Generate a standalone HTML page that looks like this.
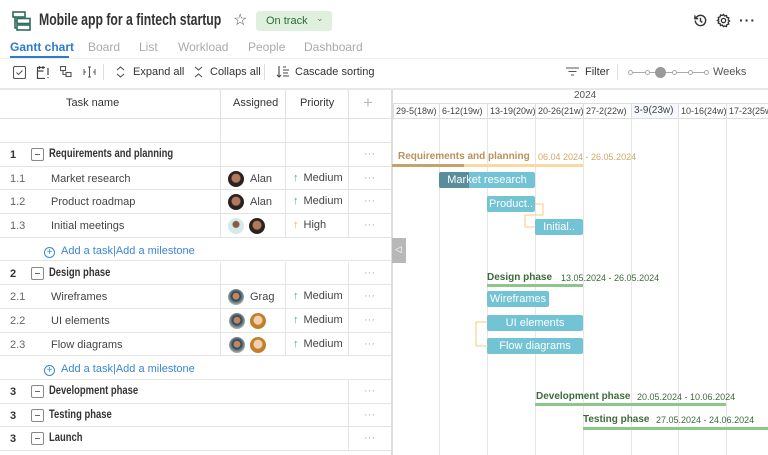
<!DOCTYPE html><html><head><meta charset="utf-8"><style>
*{box-sizing:border-box;margin:0;padding:0}
body{width:768px;height:455px;overflow:hidden;background:#fff;font-family:"Liberation Sans",sans-serif;color:#333;position:relative}
.a{position:absolute}
.t{font-size:11px;white-space:nowrap}
.row{position:absolute;left:0;width:391px;height:23.7px;border-bottom:1px solid #e4e4e4}
.vl{position:absolute;top:0;bottom:0;width:1px;background:#e4e4e4}
.num{position:absolute;left:10px;top:6px;font-size:11px;color:#666}
.nb{color:#333;font-weight:bold}
.name{position:absolute;left:51px;top:6px;font-size:11px;color:#444}
.gn{left:49px;top:5px;font-weight:bold;color:#333;font-size:11.5px;transform:scaleX(.82);transform-origin:left;white-space:nowrap}
.box{position:absolute;left:31px;top:5px;width:13px;height:13px;border:1px solid #888;border-radius:2px}
.box:after{content:"";position:absolute;left:3px;top:5px;width:5px;height:1px;background:#666}
.dots{position:absolute;left:364px;top:6px;font-size:11px;line-height:11px;color:#aaa}
.av{position:absolute;top:4px;width:16px;height:16px;border-radius:50%;background:radial-gradient(circle at 50% 45%,#b07a5a 0 4px,#2a2220 5px)}
.av2{background:radial-gradient(circle at 50% 40%,#8a5a40 0 3px,#d4e9ec 4px)}
.av3{background:radial-gradient(circle at 50% 45%,#c08860 0 3px,#2c3e50 4px,#9aa 8px)}
.av4{background:radial-gradient(circle at 50% 45%,#f0d0b0 0 4px,#c0802a 5px)}
.who{position:absolute;left:250px;top:6px;font-size:11px;color:#444}
.pr{position:absolute;left:293px;top:5px;font-size:11px;color:#444}
.pr b{font-weight:normal;color:#3bb56b;margin-right:5px}
.add{position:absolute;left:44px;top:7px;font-size:11px;color:#3a86d4}
.gl{position:absolute;top:118px;bottom:0;width:1px;background:#e6e6e6}
.bar{position:absolute;height:16px;background:#72c3d3;border-radius:2px;color:#fff;font-size:11px;text-align:center;line-height:16px;overflow:hidden}
.wk{position:absolute;top:104px;height:14px;font-size:9px;color:#444;border-left:1px solid #ddd;padding-left:2px;line-height:14px;white-space:nowrap;width:48px;overflow:hidden}
.gb{font-weight:bold;font-size:10px}
.gd{font-size:9px}
</style></head><body>
<svg class="a" style="left:12px;top:11px" width="20" height="20" viewBox="0 0 20 20" fill="none" stroke="#2f6b5e" stroke-width="1.6"><rect x="1" y="1" width="12" height="5"/><rect x="5" y="7.5" width="13" height="5"/><rect x="5" y="14" width="13" height="5"/><path d="M3 6v11h2M3 10h2"/></svg>
<div class="a" style="left:39px;top:10px;font-size:17px;font-weight:bold;color:#333;white-space:nowrap;transform:scaleX(.72);transform-origin:left">Mobile app for a fintech startup</div>
<div class="a" style="left:233px;top:10px;font-size:16px;color:#555">☆</div>
<div class="a" style="left:256px;top:11px;width:76px;height:20px;background:#dff0dc;border-radius:3px;font-size:11px;color:#2f6a3a;padding:4px 0 0 10px">On track<span style="position:absolute;left:60px;top:2px;color:#777;font-size:9px">⌄</span></div>
<svg class="a" style="left:693px;top:13px" width="15" height="15" viewBox="0 0 16 16" fill="none" stroke="#333" stroke-width="1.5"><path d="M2.5 8a5.5 5.5 0 1 0 1.6-3.9L2 6M2 2.5V6h3.5M8 5v3.5l2 1.5"/></svg>
<svg class="a" style="left:716px;top:13px" width="15" height="15" viewBox="0 0 16 16" fill="none" stroke="#333" stroke-width="1.4"><circle cx="8" cy="8" r="2.3"/><path d="M8 1.5l1.2 1.7 2-.6.4 2 2 .6-.6 2 1.5 1.3-1.5 1.3.6 2-2 .6-.4 2-2-.6L8 14.5l-1.2-1.7-2 .6-.4-2-2-.6.6-2L1.5 8 3 6.7l-.6-2 2-.6.4-2 2 .6z"/></svg>
<div class="a" style="left:739px;top:12px;font-size:14px;font-weight:bold;color:#333;letter-spacing:1px">···</div>
<div class="a t" style="left:10px;top:40px;font-size:12px;color:#2b7bd0;font-weight:bold">Gantt chart</div>
<div class="a" style="left:10px;top:56px;width:59px;height:2px;background:#2b7bd0"></div>
<div class="a t" style="left:88px;top:40px;font-size:12px;color:#aaa">Board</div>
<div class="a t" style="left:139px;top:40px;font-size:12px;color:#aaa">List</div>
<div class="a t" style="left:178px;top:40px;font-size:12px;color:#aaa">Workload</div>
<div class="a t" style="left:248px;top:40px;font-size:12px;color:#aaa">People</div>
<div class="a t" style="left:304px;top:40px;font-size:12px;color:#aaa">Dashboard</div>
<div class="a" style="left:0;top:58px;width:768px;height:1px;background:#eee"></div>
<svg class="a" style="left:13px;top:66px" width="13" height="13" viewBox="0 0 13 13" fill="none" stroke="#555" stroke-width="1.1"><rect x=".5" y=".5" width="12" height="12" rx="1.5"/><path d="M3.5 6.5l2 2 4-4"/></svg>
<svg class="a" style="left:36px;top:65px" width="14" height="14" viewBox="0 0 14 14" fill="none" stroke="#444" stroke-width="1.2"><path d="M9 2.5H1.5v11h7.5M3.5 1v3M7 1v3M1.5 6h6M12 3v7M12 12v1"/></svg>
<svg class="a" style="left:60px;top:66px" width="12" height="12" viewBox="0 0 12 12" fill="none" stroke="#555" stroke-width="1.1"><rect x=".5" y=".5" width="5" height="4"/><rect x="6" y="6.5" width="5" height="4"/><path d="M3 4.5v4h3"/></svg>
<svg class="a" style="left:83px;top:66px" width="13" height="12" viewBox="0 0 13 12" fill="none" stroke="#555" stroke-width="1"><path d="M1 3v6M1 6h2M6.5 1v10M5 1h3M5 11h3M12 3v6M10 6h2"/></svg>
<div class="a" style="left:103px;top:64px;width:1px;height:16px;background:#ddd"></div>
<svg class="a" style="left:116px;top:66px" width="9" height="12" fill="none" stroke="#555" stroke-width="1.1"><path d="M1 4l3.5-3L8 4M1 8l3.5 3L8 8"/></svg>
<div class="a t" style="left:133px;top:66px;color:#333">Expand all</div>
<svg class="a" style="left:194px;top:66px" width="9" height="12" fill="none" stroke="#555" stroke-width="1.1"><path d="M1 1l3.5 3L8 1M1 11l3.5-3L8 11"/></svg>
<div class="a t" style="left:210px;top:66px;color:#333">Collaps all</div>
<div class="a" style="left:264px;top:64px;width:1px;height:16px;background:#ddd"></div>
<svg class="a" style="left:276px;top:65px" width="14" height="13" fill="none" stroke="#444" stroke-width="1.1"><path d="M3 1v11M1 10l2 2 2-2M7 5h6M7 8h5M7 11h6M7 2h3"/></svg>
<div class="a t" style="left:295px;top:66px;color:#333">Cascade sorting</div>
<svg class="a" style="left:566px;top:67px" width="13" height="9" fill="none" stroke="#555" stroke-width="1.1"><path d="M0 1h13M2.5 4.5h8M5 8h3"/></svg>
<div class="a t" style="left:585px;top:66px;color:#333">Filter</div>
<div class="a" style="left:617px;top:64px;width:1px;height:16px;background:#ddd"></div>
<div class="a" style="left:628px;top:72px;width:80px;height:1px;background:#aaa"></div>
<div class="a" style="left:628px;top:70px;width:5px;height:5px;border:1px solid #aaa;border-radius:50%;background:#fff"></div>
<div class="a" style="left:645px;top:70px;width:5px;height:5px;border:1px solid #aaa;border-radius:50%;background:#fff"></div>
<div class="a" style="left:655px;top:67px;width:11px;height:11px;border-radius:50%;background:#999"></div>
<div class="a" style="left:672px;top:70px;width:5px;height:5px;border:1px solid #aaa;border-radius:50%;background:#fff"></div>
<div class="a" style="left:688px;top:70px;width:5px;height:5px;border:1px solid #aaa;border-radius:50%;background:#fff"></div>
<div class="a" style="left:704px;top:70px;width:5px;height:5px;border:1px solid #aaa;border-radius:50%;background:#fff"></div>
<div class="a t" style="left:713px;top:66px;color:#555">Weeks</div>
<div class="a" style="left:0;top:88px;width:768px;height:2px;background:#e8e8e8"></div>
<div class="a" style="left:0;top:90px;width:391px;height:29px;border-bottom:1px solid #e0e0e0"></div>
<div class="a t" style="left:66px;top:97px;color:#333">Task name</div>
<div class="a" style="left:220px;top:90px;width:1px;height:28px;background:#e0e0e0"></div>
<div class="a t" style="left:233px;top:97px;color:#333">Assigned</div>
<div class="a" style="left:285px;top:90px;width:1px;height:28px;background:#e0e0e0"></div>
<div class="a t" style="left:300px;top:97px;color:#333">Priority</div>
<div class="a" style="left:348px;top:90px;width:1px;height:28px;background:#e0e0e0"></div>
<div class="a" style="left:363px;top:93px;font-size:17px;color:#bbb">+</div>
<div class="a" style="left:391px;top:90px;width:2px;height:365px;background:#ddd"></div>
<div class="a" style="left:393px;top:103px;width:375px;height:1px;background:#ddd"></div>
<div class="a" style="left:393px;top:118px;width:375px;height:1px;background:#ddd"></div>
<div class="a t" style="left:574px;top:90px;font-size:10px;color:#555">2024</div>
<div class="wk" style="left:393px">29-5(18w)</div>
<div class="wk" style="left:439px">6-12(19w)</div>
<div class="wk" style="left:487px">13-19(20w)</div>
<div class="wk" style="left:535px">20-26(21w)</div>
<div class="wk" style="left:583px">27-2(22w)</div>
<div class="wk" style="left:631px;font-size:10px;background:#f5f9fd">3-9(23w)</div>
<div class="wk" style="left:678px">10-16(24w)</div>
<div class="wk" style="left:726px">17-23(25w)</div>
<div class="gl" style="left:439px"></div><div class="gl" style="left:487px"></div><div class="gl" style="left:535px"></div><div class="gl" style="left:583px"></div><div class="gl" style="left:631px"></div><div class="gl" style="left:678px"></div><div class="gl" style="left:726px"></div>
<div class="row" style="top:119px;height:24px"><div class="vl" style="left:220px"></div><div class="vl" style="left:285px"></div><div class="vl" style="left:348px"></div></div>
<div class="row" style="top:143px"><div class="vl" style="left:220px"></div><div class="vl" style="left:285px"></div><div class="vl" style="left:348px"></div><span class="num nb">1</span><span class="box"></span><span class="name gn">Requirements and planning</span><span class="dots">···</span></div>
<div class="row" style="top:166.7px"><div class="vl" style="left:220px"></div><div class="vl" style="left:285px"></div><div class="vl" style="left:348px"></div><span class="num">1.1</span><span class="name">Market research</span><span class="av" style="left:228px"></span><span class="who">Alan</span><span class="pr"><b>↑</b>Medium</span><span class="dots">···</span></div>
<div class="row" style="top:190.4px"><div class="vl" style="left:220px"></div><div class="vl" style="left:285px"></div><div class="vl" style="left:348px"></div><span class="num">1.2</span><span class="name">Product roadmap</span><span class="av" style="left:228px"></span><span class="who">Alan</span><span class="pr"><b>↑</b>Medium</span><span class="dots">···</span></div>
<div class="row" style="top:214.1px"><div class="vl" style="left:220px"></div><div class="vl" style="left:285px"></div><div class="vl" style="left:348px"></div><span class="num">1.3</span><span class="name">Initial meetings</span><span class="av av2" style="left:228px"></span><span class="av" style="left:249px"></span><span class="pr"><b style="color:#f5a35a">↑</b>High</span><span class="dots">···</span></div>
<div class="row" style="top:237.8px"><span class="add"><span style="display:inline-block;width:11px;height:11px;border:1px solid #3a86d4;border-radius:50%;font-size:10px;line-height:9px;text-align:center;margin-right:6px;vertical-align:-1px">+</span>Add a task<span style="color:#3a86d4">|</span>Add a milestone</span></div>
<div class="row" style="top:261.5px"><div class="vl" style="left:220px"></div><div class="vl" style="left:285px"></div><div class="vl" style="left:348px"></div><span class="num nb">2</span><span class="box"></span><span class="name gn">Design phase</span><span class="dots">···</span></div>
<div class="row" style="top:285.2px"><div class="vl" style="left:220px"></div><div class="vl" style="left:285px"></div><div class="vl" style="left:348px"></div><span class="num">2.1</span><span class="name">Wireframes</span><span class="av av3" style="left:228px"></span><span class="who">Grag</span><span class="pr"><b>↑</b>Medium</span><span class="dots">···</span></div>
<div class="row" style="top:308.9px"><div class="vl" style="left:220px"></div><div class="vl" style="left:285px"></div><div class="vl" style="left:348px"></div><span class="num">2.2</span><span class="name">UI elements</span><span class="av av3" style="left:229px"></span><span class="av av4" style="left:250px"></span><span class="pr"><b>↑</b>Medium</span><span class="dots">···</span></div>
<div class="row" style="top:332.6px"><div class="vl" style="left:220px"></div><div class="vl" style="left:285px"></div><div class="vl" style="left:348px"></div><span class="num">2.3</span><span class="name">Flow diagrams</span><span class="av av3" style="left:229px"></span><span class="av av4" style="left:250px"></span><span class="pr"><b>↑</b>Medium</span><span class="dots">···</span></div>
<div class="row" style="top:356.3px"><span class="add"><span style="display:inline-block;width:11px;height:11px;border:1px solid #3a86d4;border-radius:50%;font-size:10px;line-height:9px;text-align:center;margin-right:6px;vertical-align:-1px">+</span>Add a task<span style="color:#3a86d4">|</span>Add a milestone</span></div>
<div class="row" style="top:380px"><div class="vl" style="left:348px"></div><span class="num nb">3</span><span class="box"></span><span class="name gn">Development phase</span><span class="dots">···</span></div>
<div class="row" style="top:403.7px"><div class="vl" style="left:348px"></div><span class="num nb">3</span><span class="box"></span><span class="name gn">Testing phase</span><span class="dots">···</span></div>
<div class="row" style="top:427.4px"><div class="vl" style="left:348px"></div><span class="num nb">3</span><span class="box"></span><span class="name gn">Launch</span><span class="dots">···</span></div>
<div class="a" style="left:392px;top:238px;width:14px;height:25px;background:#b8b8b8"></div>
<div class="a t" style="left:395px;top:244px;color:#fff;font-size:9px">◁</div>
<div class="a t gb" style="left:398px;top:151px;color:#b8915a">Requirements and planning</div>
<div class="a t gd" style="left:538px;top:152px;color:#d0a86a">06.04 2024 - 26.05.2024</div>
<div class="a" style="left:392px;top:164px;width:191px;height:3px;background:#fbd8a0"></div>
<div class="a" style="left:392px;top:164px;width:72px;height:3px;background:#c9a06a"></div>
<div class="bar" style="left:439px;top:172px;width:96px;background:linear-gradient(90deg,#5a8d9b 0 30px,#72c3d3 30px)">Market research</div>
<div class="bar" style="left:487px;top:196px;width:48px">Product..</div>
<div class="bar" style="left:535px;top:219px;width:48px">Initial..</div>
<svg class="a" style="left:520px;top:200px" width="30" height="32" fill="none" stroke="#fbc978" stroke-width="1"><path d="M15 4h8v11H5v12h10"/></svg>
<div class="a t gb" style="left:487px;top:272px;color:#3d6b3a">Design phase</div>
<div class="a t gd" style="left:561px;top:273px;color:#3d6b3a">13.05.2024 - 26.05.2024</div>
<div class="a" style="left:487px;top:284px;width:96px;height:3px;background:#8cc68a"></div>
<div class="bar" style="left:487px;top:291px;width:62px">Wireframes</div>
<div class="bar" style="left:487px;top:315px;width:96px">UI elements</div>
<div class="bar" style="left:487px;top:338px;width:96px">Flow diagrams</div>
<svg class="a" style="left:472px;top:320px" width="18" height="30" fill="none" stroke="#fbc978" stroke-width="1"><path d="M15 2H4v24h12"/></svg>
<div class="a t gb" style="left:536px;top:391px;color:#3d6b3a">Development phase</div>
<div class="a t gd" style="left:637px;top:392px;color:#3d6b3a">20.05.2024 - 10.06.2024</div>
<div class="a" style="left:535px;top:403px;width:191px;height:3px;background:#8cc68a"></div>
<div class="a t gb" style="left:583px;top:414px;color:#3d6b3a">Testing phase</div>
<div class="a t gd" style="left:656px;top:415px;color:#3d6b3a">27.05.2024 - 24.06.2024</div>
<div class="a" style="left:583px;top:427px;width:185px;height:3px;background:#8cc68a"></div>
</body></html>
